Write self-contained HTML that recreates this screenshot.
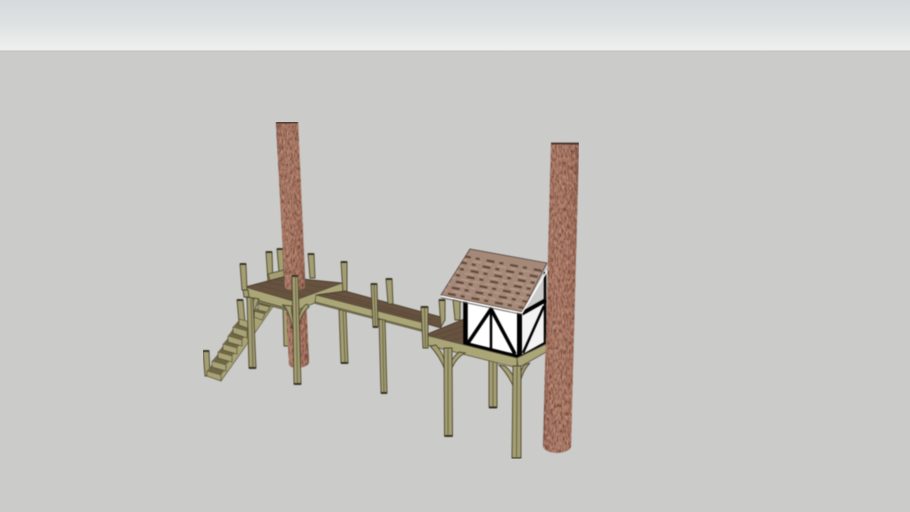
<!DOCTYPE html>
<html>
<head>
<meta charset="utf-8">
<title>Tree house model</title>
<style>
html,body{margin:0;padding:0;background:#cbcbc9;width:910px;height:512px;overflow:hidden}
svg{display:block}
.p{fill:#a49e72;stroke:#4a4630;stroke-width:.9}
.d{fill:#7f7a55;stroke:#4a4630;stroke-width:.5}
.l{fill:#aba678;stroke:#55513a;stroke-width:.8}
.m{stroke:#6f6a49;stroke-width:1.1;fill:none}
.c{stroke:#2b2a1c;stroke-width:1.8;fill:none}
.b{fill:#675240;stroke:#3d3022;stroke-width:.7}
.k{fill:none;stroke:#000;stroke-linecap:butt}
.g{stroke:#4f3d2c;stroke-width:.6;fill:none;opacity:.7}
.s{stroke:#5f4437;stroke-width:2.1;stroke-dasharray:8 5 4 7;fill:none;opacity:.95}
.s2{stroke:#c0a797;stroke-width:1.2;stroke-dasharray:6 6 9 4;fill:none;opacity:.7}
.t{fill:#6f6645}
.r{fill:#a8a376;stroke:#4a4630;stroke-width:.6}
</style>
</head>
<body>
<svg width="910" height="512" viewBox="0 0 910 512" xmlns="http://www.w3.org/2000/svg">
<defs>
<linearGradient id="sky" x1="0" y1="0" x2="0" y2="1">
<stop offset="0" stop-color="#d6dadd"/><stop offset=".5" stop-color="#dfe2e2"/><stop offset="1" stop-color="#eff0ef"/>
</linearGradient>
<linearGradient id="trk" x1="0" y1="0" x2="1" y2="0">
<stop offset="0" stop-color="#6f4a3c"/><stop offset=".1" stop-color="#a47260"/><stop offset=".4" stop-color="#b0806d"/><stop offset=".85" stop-color="#a5725f"/><stop offset="1" stop-color="#7a5244"/>
</linearGradient>
<filter id="bark" x="0" y="0" width="1" height="1" color-interpolation-filters="sRGB">
<feTurbulence type="fractalNoise" baseFrequency=".8 .24" numOctaves="2" seed="4" result="t"/>
<feColorMatrix in="t" values="0 0 0 0 .42  0 0 0 0 .26  0 0 0 0 .2  3 0 0 0 -1.25"/>
<feComposite in2="SourceAlpha" operator="in" result="n"/>
<feTurbulence type="fractalNoise" baseFrequency=".7 .2" numOctaves="2" seed="11" result="t2"/>
<feColorMatrix in="t2" values="0 0 0 0 .78  0 0 0 0 .6  0 0 0 0 .52  2.4 0 0 0 -1.1"/>
<feComposite in2="SourceAlpha" operator="in" result="n2"/>
<feMerge><feMergeNode in="SourceGraphic"/><feMergeNode in="n"/><feMergeNode in="n2"/></feMerge>
</filter>
<filter id="soft" x="0" y="0" width="1" height="1" color-interpolation-filters="sRGB"><feGaussianBlur stdDeviation=".45"/></filter>
<clipPath id="roofclip"><polygon points="470,249 547,263 522,312 441,295"/></clipPath>
</defs>

<rect width="910" height="512" fill="#cbcbc9"/>
<rect width="910" height="50.5" fill="url(#sky)"/>
<rect y="50.5" width="910" height="1" fill="#c2c2c0"/>

<g filter="url(#soft)">
<!-- rear posts left platform -->
<polygon class="p" points="283,308 288,308 289,346 284,346"/>
<polygon class="p" points="266,252 272,252 273,282 268,282"/>
<polygon class="p" points="277,249 283,249 284,272 279,272"/>
<polygon class="p" points="308,254 314,254 315,278 310,278"/>
<path class="c" d="M266,252h6M277,249h6M308,254h6"/>
<polygon class="p" points="268,274 284,270 284,278 270,281"/>

<!-- left trunk, lower -->
<path d="M276,122H298L309,362Q309,366 299,368Q289,368 289,364Z" fill="url(#trk)" filter="url(#bark)"/>

<!-- stairs -->
<polygon class="p" points="203,351 209,351 210,376 205,376"/>
<path class="c" d="M203,351h6"/>
<polygon class="p" points="237,300 243,300 245,322 239,322"/>
<path class="c" d="M237,300h6"/>
<polygon class="r" points="207,376 221,381 250,340 274,305 268,302 240,330"/>
<polygon class="r" points="207,371 221,375 221,381 207,376"/>
<polygon class="t" points="207,371 213,363 227,367 221,375"/>
<polygon class="r" points="212,361 226,365 226,371 212,367"/>
<polygon class="t" points="212,361 218,354 232,358 226,365"/>
<polygon class="r" points="218,352 232,356 232,362 218,358"/>
<polygon class="t" points="218,352 223,346 237,350 232,356"/>
<polygon class="r" points="223,344 237,348 237,354 223,350"/>
<polygon class="t" points="223,344 228,338 242,342 237,348"/>
<polygon class="r" points="228,336 242,340 242,346 228,342"/>
<polygon class="t" points="228,336 233,329 247,333 242,340"/>
<polygon class="r" points="233,327 247,331 247,338 233,333"/>
<polygon class="t" points="233,327 239,320 250,323 247,331"/>
<polygon class="r" points="239,319 250,322 250,329 239,325"/>
<polygon class="t" points="254,311 260,306 270,309 265,314"/>
<polygon class="r" points="254,311 265,314 262,320 254,317"/>
<polygon class="t" points="258,304 264,300 274,303 270,307"/>
<polygon class="r" points="258,304 270,307 267,312 258,310"/>

<!-- left platform -->
<polygon class="b" points="245,287 283,277 342,283 293,301"/>
<path class="g" d="M255,284.500L305,296.500M265,282L316,292M275,279.500L327,288"/>
<polygon class="l" points="245,287 293,301 293,310 246,297"/>
<polygon class="d" points="246,297 293,310 293,312 247,300"/>
<polygon class="l" points="293,301 342,283 344,291 300,309 293,310"/>
<!-- upper trunk -->
<path d="M276,122L298,122L305,288Q295,293 285,288Z" fill="url(#trk)" filter="url(#bark)"/>
<path d="M276,122.500H298" stroke="#3f2e26" stroke-width="1.800"/>

<!-- left braces -->
<path class="p" d="M282,305Q288,306 293,331L293,320Q291,309 292,306Z"/>
<path class="p" d="M307,304Q300,307 298,322L299,329Q300,314 309,307Z"/>
<path class="p" d="M249,297Q255,302 254,317L250,322Q253,308 247,300Z"/>
<path class="p" d="M259,299L252,318L250,312L254,298Z"/>

<!-- left platform posts -->
<polygon class="p" points="240,264 246,264 247,290 242,290"/>
<path class="c" d="M240,264h6"/>
<polygon class="p" points="243,290 248,290 249,297 244,297"/>
<polygon class="p" points="247,297 253,298 256,368 249,368"/>
<path class="m" d="M251,298L253,367"/>
<path class="c" d="M249,368h7"/>
<polygon class="p" points="341,262 347,262 347,293 343,293"/>
<path class="c" d="M341,262h6"/>
<polygon class="p" points="339,310 346,310 348,363 341,363"/>
<path class="m" d="M343,310L345,362"/>
<path class="c" d="M341,363h7"/>

<!-- walkway -->
<polygon class="b" points="316,295 345,291 441,317 441,328 424,323"/>
<path class="g" d="M331,293L432,320M323,294L428,321.500"/>
<polygon class="l" points="316,295 424,323 426,331 315,302"/>
<polygon class="d" points="315,302 426,331 426,332.500 315,303.500"/>

<!-- walkway posts -->
<polygon class="p" points="386,279 392,279 393,304 388,304"/>
<path class="c" d="M386,279h6"/>
<polygon class="p" points="379,319 385,320 387,393 381,393"/>
<path class="m" d="M382.500,320L384,392"/>
<path class="c" d="M381,393h6"/>
<polygon class="p" points="371,284 377,284 378,327 373,327"/>
<path class="m" d="M374,285L375.500,326"/>
<path class="c" d="M371,284h6M373,327h5"/>
<polygon class="p" points="439,300 445,300 445,320 441,327"/>
<path class="c" d="M439,300h6"/>
<polygon class="p" points="453,300 460,300 460,320 455,320"/>

<!-- rear lower post -->
<polygon class="p" points="489,360 497,360 497,407 489,407"/>
<path class="m" d="M493,360V407"/>
<path class="c" d="M489,407.500h8"/>

<!-- right deck -->
<polygon class="b" points="425,335 464,319 464,345 515,358"/>
<path class="g" d="M432,336L464,326M441,338.500L464,331M450,341L464,337"/>

<!-- house walls -->
<polygon fill="#fff" points="464,302 522,314 517,358 464,346"/>
<polygon fill="#f4f4f4" points="522,314 545,300 545,344 518,358"/>
<path class="k" stroke-width="4.500" d="M465.500,300V344"/>
<path class="k" stroke-width="2.500" d="M491,307V352"/>
<path class="k" stroke-width="5" d="M519.500,312V358"/>
<path class="k" stroke-width="4" d="M464,343.500L519,357"/>
<path class="k" stroke-width="3.500" d="M491,309L468,343"/>
<path class="k" stroke-width="3.500" d="M491,309L515,354"/>
<path class="k" stroke-width="4" d="M522,313.500L546,300"/>
<path class="k" stroke-width="2.500" d="M523,353L544,306"/>
<path class="k" stroke-width="3.500" d="M520,357.500L546,343"/>
<path class="k" stroke-width="2.500" d="M545,272V345"/>

<!-- roof -->
<polygon points="470,249 547,263 522,312 441,295" fill="#a48878" stroke="#4c3d35" stroke-width=".8"/>
<g clip-path="url(#roofclip)">
<path class="s" d="M463,256l85,16M459,262l85,16"/>
<path class="s" stroke-dashoffset="8" d="M455,268l85,16M451,274l85,16"/>
<path class="s" stroke-dashoffset="15" d="M447,280l85,16M443,286l85,16M439,292l85,16"/>
<path class="s2" d="M461,259l85,16M457,265l85,16M453,271l85,16M449,277l85,16M445,283l85,16M441,289l85,16"/>
</g>
<path d="M441,296L522,313L547,271" fill="none" stroke="#fff" stroke-width="1.500"/>
<path d="M441,297.500L522,314.500" fill="none" stroke="#55524a" stroke-width=".8"/>

<!-- right deck beams -->
<polygon class="l" points="425,335 517,358 518,368 427,345"/>
<polygon class="l" points="517,358 546,344 546,352 518,368"/>
<path d="M517,358V368" stroke="#55513a" stroke-width=".8"/>
<polygon class="p" points="421,307 428,307 428,348 423,348"/>
<path class="m" d="M424.500,308L425.500,347"/>
<path class="c" d="M421,307h7"/>

<!-- right braces -->
<path class="p" d="M430,346L436,345Q443,353 445,362L445,370Q439,355 430,346Z"/>
<path class="p" d="M465,353L459,352Q453,357 451,362L451,370Q456,358 465,353Z"/>
<path class="p" d="M499,365L505,366Q512,372 514,378L514,388Q508,374 499,365Z"/>
<path class="p" d="M530,363L524,365Q521,370 520,375L520,383Q523,370 530,363Z"/>

<!-- right main posts -->
<polygon class="p" points="444,348 452,348 452.500,436 444.500,436"/>
<path class="m" d="M448,349V435"/>
<path class="c" d="M444.500,436h8"/>
<polygon class="p" points="513,366 521,366 521,458 512,458"/>
<path class="m" d="M517,367L516.500,457"/>
<path class="c" d="M512,458.500h9"/>

<!-- front post of left platform -->
<polygon class="p" points="292,276 298,276 301,384 294,384"/>
<path class="m" d="M295.500,277L297.500,383"/>
<path class="c" d="M292,276h6M294,384h7"/>

<!-- right trunk -->
<path d="M551,143H579L571,446Q570,452 557,453Q544,452 543,446Z" fill="url(#trk)" filter="url(#bark)"/>
<path d="M551,143.500H579" stroke="#3f2e26" stroke-width="1.800"/>
</g>
</svg>
</body>
</html>
